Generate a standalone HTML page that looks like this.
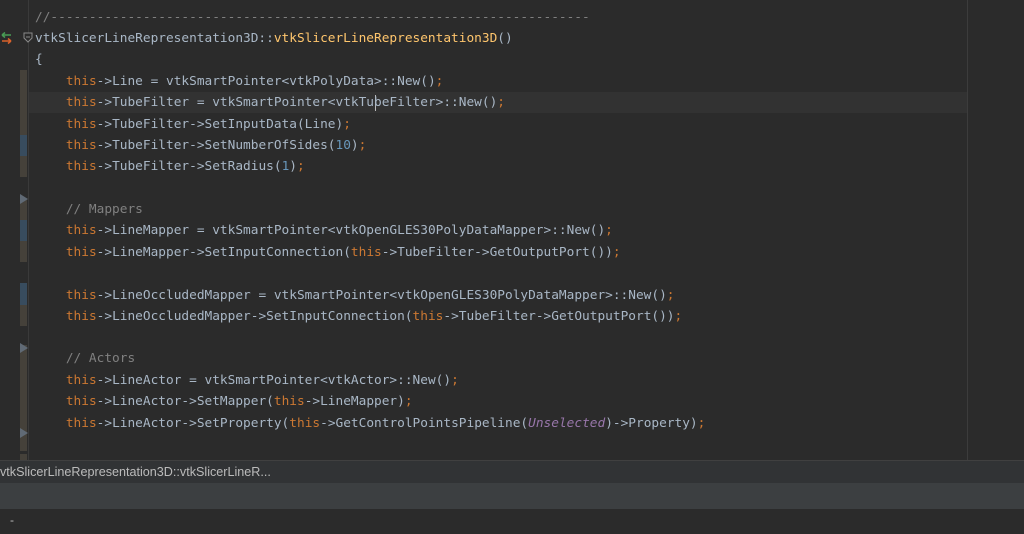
<!DOCTYPE html>
<html><head><meta charset="utf-8"><style>
html,body{margin:0;padding:0;width:1024px;height:534px;overflow:hidden;background:#2b2b2b;}
#ed{position:absolute;left:0;top:0;width:1024px;height:460px;background:#2b2b2b;}
#gut{position:absolute;left:0;top:0;width:28px;height:460px;background:#2b2b2b;border-right:1px solid #3a3a3a;}
.mk{position:absolute;left:20px;width:7px;}
.br{background:#45413a;}
.bl{background:#384c5e;}
.tri{position:absolute;left:20px;width:0;height:0;border-top:5px solid transparent;border-bottom:5px solid transparent;border-left:8px solid #606a75;}
#cur{position:absolute;left:29px;top:92px;width:938px;height:21px;background:#323232;}
#rm{position:absolute;left:967px;top:0;width:1px;height:460px;background:#3c3c3c;}
.ln{position:absolute;left:35px;font-family:"DejaVu Sans Mono","Liberation Mono",monospace;font-size:12.8px;color:#a9b7c6;white-space:pre;line-height:21px;margin-top:1px;}
.k{color:#cc7832}.c{color:#808080}.f{color:#ffc66d}.n{color:#6897bb}.p{color:#9876aa;font-style:italic}
#bc{position:absolute;left:0;top:460px;width:1024px;height:23px;background:#313335;border-top:1px solid #404040;box-sizing:border-box;font-family:"Liberation Sans",sans-serif;font-size:12.6px;color:#bbbbbb;line-height:22px;}
#bar{position:absolute;left:0;top:483px;width:1024px;height:26px;background:#3c3f41;}
#bot{position:absolute;left:0;top:509px;width:1024px;height:25px;background:#2b2b2b;font-family:"Liberation Sans",sans-serif;font-size:12px;color:#bbbbbb;}
#caret{position:absolute;left:375px;top:95px;width:1px;height:16px;background:#bbbbbb;}
</style></head><body>
<div id="ed">
<div id="cur"></div>
<div id="gut">
<div class="mk br" style="top:70px;height:22px"></div>
<div class="mk br" style="top:92px;height:43px"></div>
<div class="mk bl" style="top:135px;height:21px"></div>
<div class="mk br" style="top:156px;height:21px"></div>
<div class="mk br" style="top:199px;height:21px"></div>
<div class="mk bl" style="top:220px;height:21px"></div>
<div class="mk br" style="top:241px;height:21px"></div>
<div class="mk bl" style="top:283px;height:22px"></div>
<div class="mk br" style="top:305px;height:21px"></div>
<div class="mk br" style="top:345px;height:106px"></div>
<div class="mk br" style="top:454px;height:6px"></div>
<div class="tri" style="top:194px"></div>
<div class="tri" style="top:343px"></div>
<div class="tri" style="top:428px"></div>
<svg style="position:absolute;left:0;top:31px" width="14" height="14"><path d="M2 4h9M2 4l3-2.5M2 4l3 2.5" stroke="#499c54" stroke-width="1.5" fill="none"/><path d="M2 10h9M11 10l-3-2.5M11 10l-3 2.5" stroke="#d9622b" stroke-width="1.5" fill="none"/></svg>
<svg style="position:absolute;left:23px;top:32px" width="10" height="12"><path d="M1 1h8v5l-4 4l-4-4z" stroke="#8a8a8a" fill="#2b2b2b"/><path d="M3 5h4" stroke="#8a8a8a"/></svg>
</div>
<div id="rm"></div>
<div id="caret"></div>
<div class="ln c" style="top:6px">//----------------------------------------------------------------------</div>
<div class="ln" style="top:27px">vtkSlicerLineRepresentation3D::<span class="f">vtkSlicerLineRepresentation3D</span>()</div>
<div class="ln" style="top:48px">{</div>
<div class="ln" style="top:70px">    <span class="k">this</span>-&gt;Line = vtkSmartPointer&lt;vtkPolyData&gt;::New()<span class="k">;</span></div>
<div class="ln" style="top:91px">    <span class="k">this</span>-&gt;TubeFilter = vtkSmartPointer&lt;vtkTubeFilter&gt;::New()<span class="k">;</span></div>
<div class="ln" style="top:113px">    <span class="k">this</span>-&gt;TubeFilter-&gt;SetInputData(Line)<span class="k">;</span></div>
<div class="ln" style="top:134px">    <span class="k">this</span>-&gt;TubeFilter-&gt;SetNumberOfSides(<span class="n">10</span>)<span class="k">;</span></div>
<div class="ln" style="top:155px">    <span class="k">this</span>-&gt;TubeFilter-&gt;SetRadius(<span class="n">1</span>)<span class="k">;</span></div>
<div class="ln c" style="top:198px">    // Mappers</div>
<div class="ln" style="top:219px">    <span class="k">this</span>-&gt;LineMapper = vtkSmartPointer&lt;vtkOpenGLES30PolyDataMapper&gt;::New()<span class="k">;</span></div>
<div class="ln" style="top:241px">    <span class="k">this</span>-&gt;LineMapper-&gt;SetInputConnection(<span class="k">this</span>-&gt;TubeFilter-&gt;GetOutputPort())<span class="k">;</span></div>
<div class="ln" style="top:284px">    <span class="k">this</span>-&gt;LineOccludedMapper = vtkSmartPointer&lt;vtkOpenGLES30PolyDataMapper&gt;::New()<span class="k">;</span></div>
<div class="ln" style="top:305px">    <span class="k">this</span>-&gt;LineOccludedMapper-&gt;SetInputConnection(<span class="k">this</span>-&gt;TubeFilter-&gt;GetOutputPort())<span class="k">;</span></div>
<div class="ln c" style="top:347px">    // Actors</div>
<div class="ln" style="top:369px">    <span class="k">this</span>-&gt;LineActor = vtkSmartPointer&lt;vtkActor&gt;::New()<span class="k">;</span></div>
<div class="ln" style="top:390px">    <span class="k">this</span>-&gt;LineActor-&gt;SetMapper(<span class="k">this</span>-&gt;LineMapper)<span class="k">;</span></div>
<div class="ln" style="top:412px">    <span class="k">this</span>-&gt;LineActor-&gt;SetProperty(<span class="k">this</span>-&gt;GetControlPointsPipeline(<span class="p">Unselected</span>)-&gt;Property)<span class="k">;</span></div>
</div>
<div id="bc"><span style="position:absolute;left:0;top:0">vtkSlicerLineRepresentation3D::vtkSlicerLineR...</span></div>
<div id="bar"></div>
<div id="bot"><span style="position:absolute;left:10px;top:4px">-</span></div>
</body></html>
